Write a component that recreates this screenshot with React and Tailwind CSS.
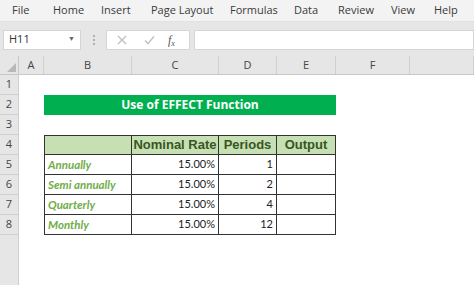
import React from 'react';

const cols = [
  { name: 'A', w: 25 },
  { name: 'B', w: 88 },
  { name: 'C', w: 87 },
  { name: 'D', w: 58 },
  { name: 'E', w: 59 },
  { name: 'F', w: 74 },
  { name: '', w: 64 },
];

// label, width of slot (start of next item - start of this one)
const menu = [
  ['File', 41],
  ['Home', 48],
  ['Insert', 50],
  ['Page Layout', 79],
  ['Formulas', 64],
  ['Data', 44],
  ['Review', 53],
  ['View', 43],
  ['Help', 30],
];

const data = [
  { label: 'Annually', rate: '15.00%', periods: 1 },
  { label: 'Semi annually', rate: '15.00%', periods: 2 },
  { label: 'Quarterly', rate: '15.00%', periods: 4 },
  { label: 'Monthly', rate: '15.00%', periods: 12 },
];

const RowHead = ({ n }) => (
  <div className="w-[19px] shrink-0 h-[20px] bg-[#e6e6e6] border-r border-b border-[#d0d0d0] flex items-center justify-center text-[11px] text-[#444]">
    {n}
  </div>
);

const Blank = ({ w }) => <div className="h-[20px] shrink-0" style={{ width: w }} />;

export default function App() {
  return (
    <div className="w-[474px] h-[285px] overflow-hidden bg-white font-['Open_Sans',sans-serif]">
      {/* menu bar */}
      <div className="h-[22px] bg-[#f3f3f3] flex items-center pl-[12px] text-[11px] text-[#3a3a3a] border-b border-[#e2e2e2] whitespace-nowrap">
        {menu.map(([t, w]) => (
          <span key={t} className="shrink-0" style={{ width: w }}>
            {t}
          </span>
        ))}
      </div>

      {/* formula bar */}
      <div className="h-[34px] bg-[#e6e6e6] flex items-center pt-[1px]">
        <div className="ml-[3px] w-[78px] h-[20px] bg-white border border-[#d4d4d4] flex items-center justify-between px-[5px] text-[11px] text-[#333]">
          <span>H11</span>
          <span className="text-[7px] text-[#666]">▼</span>
        </div>
        <div className="w-[25px] flex flex-col items-center gap-[2px]">
          <span className="w-[2px] h-[2px] bg-[#b0b0b0]" />
          <span className="w-[2px] h-[2px] bg-[#b0b0b0]" />
          <span className="w-[2px] h-[2px] bg-[#b0b0b0]" />
        </div>
        <div className="w-[84px] h-[20px] bg-white border border-[#d4d4d4] flex items-center">
          <svg className="ml-[10px]" width="10" height="10" viewBox="0 0 10 10"><path d="M1 1L9 9M9 1L1 9" stroke="#bdbdbd" strokeWidth="1.2" /></svg>
          <svg className="ml-[17px]" width="11" height="10" viewBox="0 0 11 10"><path d="M1 5.5L4 8.5L10 1.5" fill="none" stroke="#bdbdbd" strokeWidth="1.2" /></svg>
          <span className="ml-[13px] text-[#555] italic font-['Liberation_Serif',serif] text-[12px] leading-none">f<sub className="text-[8px]">x</sub></span>
        </div>
        <div className="ml-[4px] flex-1 h-[20px] bg-white border border-[#d4d4d4]" />
      </div>

      {/* column headers */}
      <div className="h-[19px] flex bg-[#e6e6e6] border-b border-[#c8c8c8]">
        <div className="w-[19px] shrink-0 border-r border-[#c8c8c8] relative">
          <svg className="absolute right-[2px] bottom-[2px]" width="9" height="9" viewBox="0 0 9 9"><path d="M9 0L9 9L0 9Z" fill="#b8b8b8" /></svg>
        </div>
        {cols.map((c, i) => (
          <div
            key={i}
            className="shrink-0 border-r border-[#d0d0d0] flex items-center justify-center text-[11px] text-[#444]"
            style={{ width: c.w }}
          >
            {c.name}
          </div>
        ))}
      </div>

      <div className="flex">
        <div className="flex flex-col">
          {[1, 2, 3, 4, 5, 6, 7, 8].map((n) => (
            <RowHead key={n} n={n} />
          ))}
          <div className="w-[19px] h-[60px] bg-[#e6e6e6] border-r border-[#d0d0d0]" />
        </div>

        <div className="flex flex-col">
          <div className="h-[20px]" />
          <div className="flex h-[20px]">
            <Blank w={25} />
            <div className="w-[292px] h-[20px] bg-[#00b050] text-white font-bold text-[12px] flex items-center justify-center">
              Use of EFFECT Function
            </div>
          </div>
          <div className="h-[20px]" />
          <div className="flex h-[20px]">
            <Blank w={25} />
            <div className="w-[88px] h-[20px] bg-[#c6e0b4] border border-[#333]" />
            {['Nominal Rate', 'Periods', 'Output'].map((t, i) => (
              <div
                key={t}
                className="h-[20px] bg-[#c6e0b4] border-y border-r border-[#333] flex items-center justify-center text-[13px] font-bold text-[#375623] font-['Liberation_Sans',sans-serif]"
                style={{ width: [87, 58, 59][i] }}
              >
                {t}
              </div>
            ))}
          </div>
          {data.map((r) => (
            <div key={r.label} className="flex h-[20px]">
              <Blank w={25} />
              <div className="w-[88px] h-[20px] border-x border-b border-[#333] flex items-center pl-[3px] text-[11.5px] font-bold italic text-[#70ad47] font-['Lato',sans-serif]">
                {r.label}
              </div>
              <div className="w-[87px] h-[20px] border-r border-b border-[#333] flex items-center justify-end pr-[3px] text-[11px] text-[#222] font-['Lato',sans-serif]">
                {r.rate}
              </div>
              <div className="w-[58px] h-[20px] border-r border-b border-[#333] flex items-center justify-end pr-[3px] text-[11px] text-[#222] font-['Lato',sans-serif]">
                {r.periods}
              </div>
              <div className="w-[59px] h-[20px] border-r border-b border-[#333]" />
            </div>
          ))}
        </div>
      </div>
    </div>
  );
}
